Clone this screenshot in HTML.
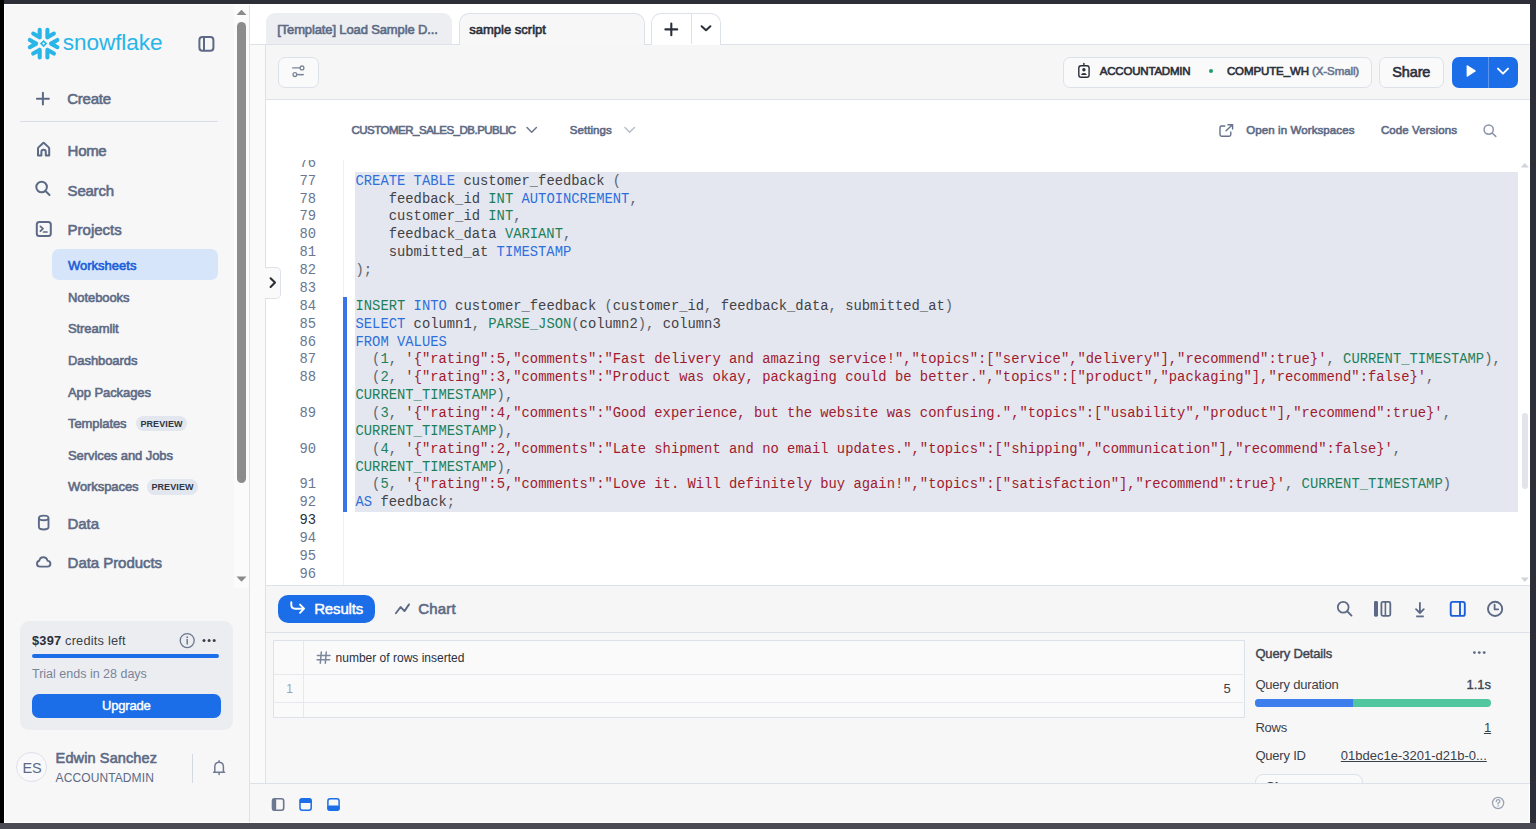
<!DOCTYPE html><html><head><meta charset="utf-8"><style>
html,body{margin:0;padding:0}
body{width:1536px;height:829px;overflow:hidden;position:relative;background:#2d2e38;font-family:"Liberation Sans",sans-serif}
.a{position:absolute}
.t{position:absolute;white-space:pre}
.code{position:absolute;left:355.5px;font-family:"Liberation Mono",monospace;font-size:13.835px;white-space:pre;color:#424247}
.ln{position:absolute;right:1220px;font-family:"Liberation Mono",monospace;font-size:13.82px;white-space:pre;color:#6b7690;text-align:right}
.k{color:#2f6fdc}.g{color:#1d7f5b}.s{color:#a01a2e}.p{color:#5f636c}
</style></head><body>
<div class="a" style="left:0px;top:0px;width:4px;height:829px;background:#000"></div>
<div class="a" style="left:0px;top:823px;width:1536px;height:6px;background:#4a4a54"></div>
<div class="a" style="left:4px;top:4px;width:1526px;height:819px;background:#ffffff"></div>
<div class="a" style="left:5px;top:5px;width:244px;height:817px;background:#f7f7f7"></div>
<div class="a" style="left:249px;top:5px;width:1px;height:817px;background:#dde1ea"></div>
<div class="a" style="left:234px;top:5px;width:15px;height:583px;background:#fbfbfb"></div>
<svg class="a" style="left:236px;top:9px;" width="11" height="7" viewBox="0 0 11 7" fill="none"><path d="M0.5 6 L5.5 0.8 L10.5 6 Z" fill="#8a8a8a"/></svg>
<div class="a" style="left:237px;top:21.7px;width:9px;height:461.1px;background:#8c8c8c;border-radius:4.5px"></div>
<svg class="a" style="left:236px;top:576px;" width="11" height="7" viewBox="0 0 11 7" fill="none"><path d="M0.5 0.5 L5.5 5.8 L10.5 0.5 Z" fill="#8a8a8a"/></svg>
<svg class="a" style="left:24px;top:24px;" width="40" height="40" viewBox="0 0 40 40" fill="none"><g stroke="#29b5e8" stroke-width="4.1" stroke-linecap="round" stroke-linejoin="round">
<path d="M15.7 5.9 V13.4 M9.2 9.6 L15.5 13.3"/>
<path d="M23.4 5.9 V13.4 M29.9 9.6 L23.6 13.3"/>
<path d="M15.7 33.4 V25.8 M9.2 29.6 L15.5 25.9"/>
<path d="M23.4 33.4 V25.8 M29.9 29.6 L23.6 25.9"/>
<path d="M5.8 16 L12.2 19.6 L5.8 23.2"/>
<path d="M33.4 16 L27 19.6 L33.4 23.2"/>
</g>
<path d="M19.6 15.9 L23.3 19.6 L19.6 23.3 L15.9 19.6 Z M19.6 18.3 L18.3 19.6 L19.6 20.9 L20.9 19.6 Z" fill="#29b5e8" fill-rule="evenodd"/></svg>
<div class="t" style="left:62.8px;top:29.26px;font-size:22.6px;line-height:27.12px;font-weight:400;color:#29b5e8;letter-spacing:-0.1px;font-family:'Liberation Sans',sans-serif;">snowflake</div>
<svg class="a" style="left:197px;top:35px;" width="19" height="18" viewBox="0 0 19 18" fill="none"><rect x="2.4" y="2.1" width="14" height="13.6" rx="3" stroke="#5d6a85" stroke-width="2"/><path d="M7 2.5 V15.5" stroke="#5d6a85" stroke-width="2"/></svg>
<svg class="a" style="left:35px;top:91px;" width="16" height="16" viewBox="0 0 16 16" fill="none"><path d="M7.9 1.7 V13.6 M1.9 7.65 H13.9" stroke="#5d6a85" stroke-width="2" stroke-linecap="round"/></svg>
<div class="t" style="left:67.2px;top:90.45px;font-size:15px;line-height:18.0px;font-weight:400;color:#5d6a85;letter-spacing:-0.22px;font-family:'Liberation Sans',sans-serif;-webkit-text-stroke:0.6px #5d6a85;">Create</div>
<div class="a" style="left:20px;top:121px;width:198px;height:1px;background:#d8dde7"></div>
<svg class="a" style="left:35px;top:140px;" width="17" height="18" viewBox="0 0 17 18" fill="none"><path d="M3 15.4 V8.6 Q3 7.9 3.5 7.4 L7.9 3.2 Q8.6 2.6 9.3 3.2 L13.7 7.4 Q14.2 7.9 14.2 8.6 V15.4 H10.8 V11.8 Q10.8 9.7 8.6 9.7 Q6.4 9.7 6.4 11.8 V15.4 Z" stroke="#5d6a85" stroke-width="2" stroke-linejoin="round"/></svg>
<div class="t" style="left:67.6px;top:142.15px;font-size:15px;line-height:18.0px;font-weight:400;color:#5d6a85;letter-spacing:-0.3px;font-family:'Liberation Sans',sans-serif;-webkit-text-stroke:0.6px #5d6a85;">Home</div>
<svg class="a" style="left:34.4px;top:179.4px;" width="18" height="18" viewBox="0 0 18 18" fill="none"><circle cx="7.6" cy="8" r="5.3" stroke="#5d6a85" stroke-width="2"/><path d="M11.5 12 L15.5 16" stroke="#5d6a85" stroke-width="2" stroke-linecap="round"/></svg>
<div class="t" style="left:67.6px;top:181.75px;font-size:15px;line-height:18.0px;font-weight:400;color:#5d6a85;letter-spacing:-0.22px;font-family:'Liberation Sans',sans-serif;-webkit-text-stroke:0.6px #5d6a85;">Search</div>
<svg class="a" style="left:35px;top:220px;" width="18" height="18" viewBox="0 0 18 18" fill="none"><rect x="1.8" y="1.9" width="14" height="14" rx="2.5" stroke="#5d6a85" stroke-width="2"/><path d="M5.4 6.3 L8 8.7 L5.4 11.1 M8.6 12 H12" stroke="#5d6a85" stroke-width="1.7" stroke-linecap="round" stroke-linejoin="round"/></svg>
<div class="t" style="left:67.6px;top:221.05px;font-size:15px;line-height:18.0px;font-weight:400;color:#5d6a85;letter-spacing:0px;font-family:'Liberation Sans',sans-serif;-webkit-text-stroke:0.6px #5d6a85;">Projects</div>
<div class="a" style="left:51.6px;top:248.7px;width:166.4px;height:31.80000000000001px;background:#d7e5fb;border-radius:7px"></div>
<div class="t" style="left:68px;top:258.05px;font-size:13px;line-height:15.6px;font-weight:400;color:#1a5fd8;letter-spacing:0px;font-family:'Liberation Sans',sans-serif;-webkit-text-stroke:0.6px #1a5fd8;">Worksheets</div>
<div class="t" style="left:68px;top:289.75px;font-size:13px;line-height:15.6px;font-weight:400;color:#5d6a85;letter-spacing:-0.08px;font-family:'Liberation Sans',sans-serif;-webkit-text-stroke:0.6px #5d6a85;">Notebooks</div>
<div class="t" style="left:68px;top:321.45px;font-size:13px;line-height:15.6px;font-weight:400;color:#5d6a85;letter-spacing:-0.08px;font-family:'Liberation Sans',sans-serif;-webkit-text-stroke:0.6px #5d6a85;">Streamlit</div>
<div class="t" style="left:68px;top:353.15px;font-size:13px;line-height:15.6px;font-weight:400;color:#5d6a85;letter-spacing:-0.08px;font-family:'Liberation Sans',sans-serif;-webkit-text-stroke:0.6px #5d6a85;">Dashboards</div>
<div class="t" style="left:68px;top:384.85px;font-size:13px;line-height:15.6px;font-weight:400;color:#5d6a85;letter-spacing:-0.08px;font-family:'Liberation Sans',sans-serif;-webkit-text-stroke:0.6px #5d6a85;">App Packages</div>
<div class="t" style="left:68px;top:416.15px;font-size:13px;line-height:15.6px;font-weight:400;color:#5d6a85;letter-spacing:-0.08px;font-family:'Liberation Sans',sans-serif;-webkit-text-stroke:0.6px #5d6a85;">Templates</div>
<div class="t" style="left:68px;top:447.95px;font-size:13px;line-height:15.6px;font-weight:400;color:#5d6a85;letter-spacing:-0.08px;font-family:'Liberation Sans',sans-serif;-webkit-text-stroke:0.6px #5d6a85;">Services and Jobs</div>
<div class="t" style="left:68px;top:479.45px;font-size:13px;line-height:15.6px;font-weight:400;color:#5d6a85;letter-spacing:-0.08px;font-family:'Liberation Sans',sans-serif;-webkit-text-stroke:0.6px #5d6a85;">Workspaces</div>
<div class="a" style="left:136.2px;top:415.6px;width:50.70000000000002px;height:15.399999999999977px;background:#e2e6ee;border-radius:8px;font-size:9px;font-weight:700;color:#2f3542;text-align:center;line-height:16.99999999999998px;letter-spacing:0.1px">PREVIEW</div>
<div class="a" style="left:147.2px;top:479px;width:50.70000000000002px;height:15.5px;background:#e2e6ee;border-radius:8px;font-size:9px;font-weight:700;color:#2f3542;text-align:center;line-height:17.1px;letter-spacing:0.1px">PREVIEW</div>
<svg class="a" style="left:35px;top:513px;" width="17" height="19" viewBox="0 0 17 19" fill="none"><path d="M3.9 5 Q3.9 2.6 8.7 2.6 Q13.5 2.6 13.5 5 V14.1 Q13.5 16.5 8.7 16.5 Q3.9 16.5 3.9 14.1 Z M3.9 5 Q3.9 7.2 8.7 7.2 Q13.5 7.2 13.5 5" stroke="#5d6a85" stroke-width="1.9" stroke-linejoin="round"/></svg>
<div class="t" style="left:67.6px;top:514.65px;font-size:15px;line-height:18.0px;font-weight:400;color:#5d6a85;letter-spacing:-0.1px;font-family:'Liberation Sans',sans-serif;-webkit-text-stroke:0.6px #5d6a85;">Data</div>
<svg class="a" style="left:34.8px;top:554.5px;" width="18" height="14" viewBox="0 0 18 14" fill="none"><path d="M5.2 11.6 H12.4 Q15.4 11.6 15.4 8.8 Q15.4 6.1 12.6 5.9 Q11.7 2.2 8.3 2.2 Q4.9 2.2 4.3 5.7 Q2 6.2 2 8.7 Q2 11.6 5.2 11.6 Z" stroke="#5d6a85" stroke-width="1.9" stroke-linejoin="round"/></svg>
<div class="t" style="left:67.6px;top:554.05px;font-size:15px;line-height:18.0px;font-weight:400;color:#5d6a85;letter-spacing:-0.05px;font-family:'Liberation Sans',sans-serif;-webkit-text-stroke:0.6px #5d6a85;">Data Products</div>
<div class="a" style="left:20.2px;top:621px;width:212.5px;height:108.5px;background:#ecedf1;border-radius:9px"></div>
<div class="t" style="left:32px;top:632.53px;font-size:12.8px;line-height:15.36px;font-weight:400;color:#3a3f4a;letter-spacing:0.2px;font-family:'Liberation Sans',sans-serif;"><b style="color:#2a2f3a">$397</b> credits left</div>
<svg class="a" style="left:178px;top:632px;" width="18" height="18" viewBox="0 0 18 18" fill="none"><circle cx="9.2" cy="8.6" r="7" stroke="#6b7690" stroke-width="1.3"/><path d="M9.2 7.4 V12" stroke="#6b7690" stroke-width="1.5" stroke-linecap="round"/><circle cx="9.2" cy="5.2" r="0.9" fill="#6b7690"/></svg>
<svg class="a" style="left:201px;top:637px;" width="16" height="8" viewBox="0 0 16 8" fill="none"><circle cx="3" cy="3.6" r="1.5" fill="#3a3f4a"/><circle cx="8.1" cy="3.6" r="1.5" fill="#3a3f4a"/><circle cx="13.2" cy="3.6" r="1.5" fill="#3a3f4a"/></svg>
<div class="a" style="left:32px;top:654.4px;width:187px;height:4.0px;background:#1b6ee7;border-radius:2px"></div>
<div class="t" style="left:32px;top:666.82px;font-size:12.5px;line-height:15.0px;font-weight:400;color:#7a8499;letter-spacing:0px;font-family:'Liberation Sans',sans-serif;">Trial ends in 28 days</div>
<div class="a" style="left:31.6px;top:693.9px;width:189.4px;height:24.0px;background:#1b6ee7;border-radius:7px"></div>
<div class="t" style="left:126.3px;transform:translateX(-50%);top:698.25px;font-size:13px;line-height:15.6px;font-weight:400;color:#ffffff;letter-spacing:-0.2px;font-family:'Liberation Sans',sans-serif;-webkit-text-stroke:0.4px #ffffff;">Upgrade</div>
<div class="a" style="left:16.2px;top:751.6px;width:28.7px;height:28.7px;border:1.4px solid #dde1ea;border-radius:50%;background:#f9f9fb"></div>
<div class="t" style="left:32px;transform:translateX(-50%);top:759.93px;font-size:14.5px;line-height:17.4px;font-weight:400;color:#5d6a85;letter-spacing:-0.2px;font-family:'Liberation Sans',sans-serif;">ES</div>
<div class="t" style="left:55.6px;top:750.33px;font-size:14.5px;line-height:17.4px;font-weight:400;color:#5d6a85;letter-spacing:0.12px;font-family:'Liberation Sans',sans-serif;-webkit-text-stroke:0.6px #5d6a85;">Edwin Sanchez</div>
<div class="t" style="left:55.6px;top:771.29px;font-size:12px;line-height:14.4px;font-weight:400;color:#5d6a85;letter-spacing:0.1px;font-family:'Liberation Sans',sans-serif;">ACCOUNTADMIN</div>
<div class="a" style="left:192px;top:753.75px;width:1.1999999999999886px;height:29.350000000000023px;background:#d3d8e2"></div>
<svg class="a" style="left:211px;top:759px;" width="16" height="18" viewBox="0 0 16 18" fill="none"><path d="M2.6 13.2 H13.6 M12.4 13.2 V7.6 Q12.4 3.2 8.1 3.2 Q3.8 3.2 3.8 7.6 V13.2 M8.1 13.4 V15.6 M8.1 1.8 V3.2" stroke="#6f7a92" stroke-width="1.5" stroke-linejoin="round" stroke-linecap="round"/></svg>
<div class="a" style="left:250px;top:45px;width:15px;height:738px;background:#fafafa"></div>
<div class="a" style="left:265px;top:44px;width:1px;height:739px;background:#dde1ea"></div>
<div class="a" style="left:250px;top:44px;width:1280px;height:1px;background:#dde1ea"></div>
<div class="a" style="left:266.25px;top:13.3px;width:185.45px;height:30.7px;background:#eceef2;border-radius:9px 9px 0 0"></div>
<div class="t" style="left:277.2px;top:21.75px;font-size:13px;line-height:15.6px;font-weight:400;color:#5d6a85;letter-spacing:-0.13px;font-family:'Liberation Sans',sans-serif;-webkit-text-stroke:0.6px #5d6a85;">[Template] Load Sample D...</div>
<div class="a" style="left:458.6px;top:13.3px;width:184px;height:32px;background:#f7f7f7;border:1px solid #dde1ea;border-bottom:none;border-radius:10px 10px 0 0"></div>
<div class="t" style="left:469.3px;top:22.35px;font-size:13px;line-height:15.6px;font-weight:400;color:#2a2f3a;letter-spacing:0px;font-family:'Liberation Sans',sans-serif;-webkit-text-stroke:0.6px #2a2f3a;">sample script</div>
<div class="a" style="left:651px;top:13.3px;width:68px;height:30.7px;background:#fff;border:1px solid #dde1ea;border-bottom:none;border-radius:10px 10px 0 0"></div>
<div class="a" style="left:691px;top:14px;width:1px;height:30px;background:#dde1ea"></div>
<svg class="a" style="left:664px;top:22px;" width="15" height="15" viewBox="0 0 15 15" fill="none"><path d="M7.3 1.5 V13.3 M1.4 7.4 H13.2" stroke="#2a2f3a" stroke-width="2.1" stroke-linecap="round"/></svg>
<svg class="a" style="left:700px;top:24px;" width="12" height="9" viewBox="0 0 12 9" fill="none"><path d="M1.6 2.2 L6 6.3 L10.4 2.2" stroke="#2a2f3a" stroke-width="2" stroke-linecap="round" stroke-linejoin="round"/></svg>
<div class="a" style="left:266px;top:45px;width:1264px;height:54px;background:#f6f6f6"></div>
<div class="a" style="left:266px;top:99px;width:1264px;height:1px;background:#dde1ea"></div>
<div class="a" style="left:278.3px;top:56.6px;width:38.3px;height:29px;background:#fafafa;border:1px solid #dde1ea;border-radius:7px"></div>
<svg class="a" style="left:290px;top:63px;" width="16" height="16" viewBox="0 0 16 16" fill="none"><path d="M2.7 4.9 H9.8 M9.5 11.6 H12.7" stroke="#7b859a" stroke-width="1.4" stroke-linecap="round"/><circle cx="12" cy="4.9" r="1.9" stroke="#7b859a" stroke-width="1.3"/><circle cx="4.9" cy="11.6" r="1.9" stroke="#7b859a" stroke-width="1.3"/><path d="M6.8 11.6 H13.8" stroke="#7b859a" stroke-width="1.4"/></svg>
<div class="a" style="left:1063.4px;top:56.6px;width:306.3px;height:29px;background:#fafafa;border:1px solid #dde1ea;border-radius:7px"></div>
<svg class="a" style="left:1076px;top:62px;" width="16" height="18" viewBox="0 0 16 18" fill="none"><rect x="2.8" y="3.8" width="10.3" height="11.4" rx="2.2" stroke="#2a2f3a" stroke-width="1.4"/><path d="M7.9 1.4 V3.6" stroke="#2a2f3a" stroke-width="1.4" stroke-linecap="round"/><circle cx="7.9" cy="7.7" r="1.7" fill="#2a2f3a"/><path d="M5 13.1 Q5.3 10.9 7.9 10.9 Q10.5 10.9 10.8 13.1 Z" fill="#2a2f3a"/></svg>
<div class="t" style="left:1099.8px;top:64.87px;font-size:11.5px;line-height:13.8px;font-weight:400;color:#2a2f3a;letter-spacing:-0.2px;font-family:'Liberation Sans',sans-serif;-webkit-text-stroke:0.6px #2a2f3a;">ACCOUNTADMIN</div>
<div class="a" style="left:1208.8px;top:69.4px;width:4px;height:4px;border-radius:50%;background:#1e9e6a"></div>
<div class="t" style="left:1226.9px;top:64.87px;font-size:11.5px;line-height:13.8px;font-weight:400;color:#2a2f3a;letter-spacing:-0.1px;font-family:'Liberation Sans',sans-serif;-webkit-text-stroke:0.6px #2a2f3a;">COMPUTE_WH <span style="color:#6b7690;-webkit-text-stroke-color:#6b7690">(X-Small)</span></div>
<div class="a" style="left:1379.4px;top:56.6px;width:62.3px;height:29px;background:#fafafa;border:1px solid #dde1ea;border-radius:7px"></div>
<div class="t" style="left:1392.3px;top:64.03px;font-size:14.5px;line-height:17.4px;font-weight:400;color:#2a2f3a;letter-spacing:-0.14px;font-family:'Liberation Sans',sans-serif;-webkit-text-stroke:0.6px #2a2f3a;">Share</div>
<div class="a" style="left:1451.7px;top:56.6px;width:66.09999999999991px;height:31.199999999999996px;background:#1b6ee7;border-radius:7px"></div>
<div class="a" style="left:1488px;top:56.6px;width:1px;height:31.199999999999996px;background:rgba(255,255,255,0.28)"></div>
<svg class="a" style="left:1463px;top:63px;" width="16" height="16" viewBox="0 0 16 16" fill="none"><path d="M3.6 3.2 Q3.6 1.9 4.8 2.6 L12.4 7.3 Q13.3 8 12.4 8.6 L4.8 13.4 Q3.6 14.1 3.6 12.8 Z" fill="#fff"/></svg>
<svg class="a" style="left:1496px;top:66px;" width="14" height="11" viewBox="0 0 14 11" fill="none"><path d="M2 2.6 L7 7.6 L12 2.6" stroke="#fff" stroke-width="2" stroke-linecap="round" stroke-linejoin="round"/></svg>
<div class="a" style="left:266px;top:100px;width:1264px;height:485px;background:#ffffff"></div>
<div class="t" style="left:351.5px;top:123.97px;font-size:11.5px;line-height:13.8px;font-weight:400;color:#5d6a85;letter-spacing:-0.5px;font-family:'Liberation Sans',sans-serif;-webkit-text-stroke:0.6px #5d6a85;">CUSTOMER_SALES_DB.PUBLIC</div>
<svg class="a" style="left:525px;top:125px;" width="14" height="10" viewBox="0 0 14 10" fill="none"><path d="M2 2.5 L6.7 7.2 L11.4 2.5" stroke="#6b7690" stroke-width="1.5" stroke-linecap="round" stroke-linejoin="round"/></svg>
<div class="t" style="left:569.8px;top:123.97px;font-size:11.5px;line-height:13.8px;font-weight:400;color:#5d6a85;letter-spacing:0.05px;font-family:'Liberation Sans',sans-serif;-webkit-text-stroke:0.6px #5d6a85;">Settings</div>
<svg class="a" style="left:623px;top:125px;" width="14" height="10" viewBox="0 0 14 10" fill="none"><path d="M2 2.5 L6.7 7.2 L11.4 2.5" stroke="#b4bbc8" stroke-width="1.4" stroke-linecap="round" stroke-linejoin="round"/></svg>
<svg class="a" style="left:1218px;top:122px;" width="18" height="17" viewBox="0 0 18 17" fill="none"><path d="M6.8 4 H3.6 Q2 4 2 5.6 V12.6 Q2 14.2 3.6 14.2 H11.2 Q12.8 14.2 12.8 12.6 V10 M8 8.8 L14.2 2.9 M10 2.7 H14.6 V7.1" stroke="#66728a" stroke-width="1.4" stroke-linecap="round" stroke-linejoin="round"/></svg>
<div class="t" style="left:1246.2px;top:123.57px;font-size:11.5px;line-height:13.8px;font-weight:400;color:#5d6a85;letter-spacing:0.1px;font-family:'Liberation Sans',sans-serif;-webkit-text-stroke:0.6px #5d6a85;">Open in Workspaces</div>
<div class="t" style="left:1380.9px;top:123.57px;font-size:11.5px;line-height:13.8px;font-weight:400;color:#5d6a85;letter-spacing:0.1px;font-family:'Liberation Sans',sans-serif;-webkit-text-stroke:0.6px #5d6a85;">Code Versions</div>
<svg class="a" style="left:1482px;top:123px;" width="16" height="15" viewBox="0 0 16 15" fill="none"><circle cx="6.7" cy="6.6" r="4.6" stroke="#8b94a8" stroke-width="1.5"/><path d="M10.1 10 L13.8 13.4" stroke="#8b94a8" stroke-width="1.5" stroke-linecap="round"/></svg>
<div class="a" style="left:266px;top:160px;width:1263px;height:425px;overflow:hidden">
<div class="a" style="left:77px;top:0;width:1px;height:425px;background:#eef0f4"></div>
<div class="a" style="left:89px;top:12.199999999999989px;width:1163px;height:339.50px;background:#e4e7ef"></div>
<div class="a" style="left:77px;top:137.29px;width:4px;height:214.41px;background:#3b74e8"></div>
<div class="ln" style="right:1213px;top:-5.17px;line-height:17.87px;color:#6b7690">76</div>
<div class="ln" style="right:1213px;top:12.70px;line-height:17.87px;color:#6b7690">77</div>
<div class="code" style="left:89.5px;top:12.70px;line-height:17.87px"><span class="k">CREATE</span> <span class="k">TABLE</span> customer_feedback <span class="p">(</span></div>
<div class="ln" style="right:1213px;top:30.57px;line-height:17.87px;color:#6b7690">78</div>
<div class="code" style="left:89.5px;top:30.57px;line-height:17.87px">    feedback_id <span class="g">INT</span> <span class="k">AUTOINCREMENT</span><span class="p">,</span></div>
<div class="ln" style="right:1213px;top:48.44px;line-height:17.87px;color:#6b7690">79</div>
<div class="code" style="left:89.5px;top:48.44px;line-height:17.87px">    customer_id <span class="g">INT</span><span class="p">,</span></div>
<div class="ln" style="right:1213px;top:66.31px;line-height:17.87px;color:#6b7690">80</div>
<div class="code" style="left:89.5px;top:66.31px;line-height:17.87px">    feedback_data <span class="g">VARIANT</span><span class="p">,</span></div>
<div class="ln" style="right:1213px;top:84.18px;line-height:17.87px;color:#6b7690">81</div>
<div class="code" style="left:89.5px;top:84.18px;line-height:17.87px">    submitted_at <span class="k">TIMESTAMP</span></div>
<div class="ln" style="right:1213px;top:102.05px;line-height:17.87px;color:#6b7690">82</div>
<div class="code" style="left:89.5px;top:102.05px;line-height:17.87px"><span class="p">)</span><span class="p">;</span></div>
<div class="ln" style="right:1213px;top:119.92px;line-height:17.87px;color:#6b7690">83</div>
<div class="ln" style="right:1213px;top:137.79px;line-height:17.87px;color:#6b7690">84</div>
<div class="code" style="left:89.5px;top:137.79px;line-height:17.87px"><span class="g">INSERT</span> <span class="k">INTO</span> customer_feedback <span class="p">(</span>customer_id<span class="p">,</span> feedback_data<span class="p">,</span> submitted_at<span class="p">)</span></div>
<div class="ln" style="right:1213px;top:155.66px;line-height:17.87px;color:#6b7690">85</div>
<div class="code" style="left:89.5px;top:155.66px;line-height:17.87px"><span class="k">SELECT</span> column1<span class="p">,</span> <span class="g">PARSE_JSON</span><span class="p">(</span>column2<span class="p">)</span><span class="p">,</span> column3</div>
<div class="ln" style="right:1213px;top:173.53px;line-height:17.87px;color:#6b7690">86</div>
<div class="code" style="left:89.5px;top:173.53px;line-height:17.87px"><span class="k">FROM</span> <span class="k">VALUES</span></div>
<div class="ln" style="right:1213px;top:191.40px;line-height:17.87px;color:#6b7690">87</div>
<div class="code" style="left:89.5px;top:191.40px;line-height:17.87px">  <span class="p">(</span><span class="g">1</span><span class="p">,</span> <span class="s">&#x27;{&quot;rating&quot;:5,&quot;comments&quot;:&quot;Fast delivery and amazing service!&quot;,&quot;topics&quot;:[&quot;service&quot;,&quot;delivery&quot;],&quot;recommend&quot;:true}&#x27;</span><span class="p">,</span> <span class="g">CURRENT_TIMESTAMP</span><span class="p">)</span><span class="p">,</span></div>
<div class="ln" style="right:1213px;top:209.27px;line-height:17.87px;color:#6b7690">88</div>
<div class="code" style="left:89.5px;top:209.27px;line-height:17.87px">  <span class="p">(</span><span class="g">2</span><span class="p">,</span> <span class="s">&#x27;{&quot;rating&quot;:3,&quot;comments&quot;:&quot;Product was okay, packaging could be better.&quot;,&quot;topics&quot;:[&quot;product&quot;,&quot;packaging&quot;],&quot;recommend&quot;:false}&#x27;</span><span class="p">,</span></div>
<div class="code" style="left:89.5px;top:227.14px;line-height:17.87px"><span class="g">CURRENT_TIMESTAMP</span><span class="p">)</span><span class="p">,</span></div>
<div class="ln" style="right:1213px;top:245.01px;line-height:17.87px;color:#6b7690">89</div>
<div class="code" style="left:89.5px;top:245.01px;line-height:17.87px">  <span class="p">(</span><span class="g">3</span><span class="p">,</span> <span class="s">&#x27;{&quot;rating&quot;:4,&quot;comments&quot;:&quot;Good experience, but the website was confusing.&quot;,&quot;topics&quot;:[&quot;usability&quot;,&quot;product&quot;],&quot;recommend&quot;:true}&#x27;</span><span class="p">,</span></div>
<div class="code" style="left:89.5px;top:262.88px;line-height:17.87px"><span class="g">CURRENT_TIMESTAMP</span><span class="p">)</span><span class="p">,</span></div>
<div class="ln" style="right:1213px;top:280.75px;line-height:17.87px;color:#6b7690">90</div>
<div class="code" style="left:89.5px;top:280.75px;line-height:17.87px">  <span class="p">(</span><span class="g">4</span><span class="p">,</span> <span class="s">&#x27;{&quot;rating&quot;:2,&quot;comments&quot;:&quot;Late shipment and no email updates.&quot;,&quot;topics&quot;:[&quot;shipping&quot;,&quot;communication&quot;],&quot;recommend&quot;:false}&#x27;</span><span class="p">,</span></div>
<div class="code" style="left:89.5px;top:298.62px;line-height:17.87px"><span class="g">CURRENT_TIMESTAMP</span><span class="p">)</span><span class="p">,</span></div>
<div class="ln" style="right:1213px;top:316.49px;line-height:17.87px;color:#6b7690">91</div>
<div class="code" style="left:89.5px;top:316.49px;line-height:17.87px">  <span class="p">(</span><span class="g">5</span><span class="p">,</span> <span class="s">&#x27;{&quot;rating&quot;:5,&quot;comments&quot;:&quot;Love it. Will definitely buy again!&quot;,&quot;topics&quot;:[&quot;satisfaction&quot;],&quot;recommend&quot;:true}&#x27;</span><span class="p">,</span> <span class="g">CURRENT_TIMESTAMP</span><span class="p">)</span></div>
<div class="ln" style="right:1213px;top:334.36px;line-height:17.87px;color:#6b7690">92</div>
<div class="code" style="left:89.5px;top:334.36px;line-height:17.87px"><span class="k">AS</span> feedback<span class="p">;</span></div>
<div class="ln" style="right:1213px;top:352.23px;line-height:17.87px;color:#2a2f3a">93</div>
<div class="ln" style="right:1213px;top:370.10px;line-height:17.87px;color:#6b7690">94</div>
<div class="ln" style="right:1213px;top:387.97px;line-height:17.87px;color:#6b7690">95</div>
<div class="ln" style="right:1213px;top:405.84px;line-height:17.87px;color:#6b7690">96</div>
<svg class="a" style="left:1254px;top:2px" width="10" height="6" viewBox="0 0 10 6"><path d="M0.8 5.5 L4.8 1 L8.8 5.5 Z" fill="#cfd4dc"/></svg>
<div class="a" style="left:1256.2px;top:252.60000000000002px;width:5.6px;height:76.3px;background:#e1e4ea;border-radius:3px"></div>
<svg class="a" style="left:1254px;top:417px" width="10" height="6" viewBox="0 0 10 6"><path d="M0.8 0.5 L4.8 5 L8.8 0.5 Z" fill="#cfd4dc"/></svg>
</div>
<div class="a" style="left:266px;top:585px;width:1264px;height:1px;background:#dde1ea"></div>
<div class="a" style="left:266px;top:586px;width:1264px;height:46px;background:#f6f6f6"></div>
<div class="a" style="left:266px;top:632px;width:1264px;height:1px;background:#dde1ea"></div>
<div class="a" style="left:277.5px;top:595.1px;width:97.10000000000002px;height:27.5px;background:#1b6ee7;border-radius:10px"></div>
<svg class="a" style="left:288px;top:600px;" width="18" height="16" viewBox="0 0 18 16" fill="none"><path d="M3.3 2.2 V4.8 Q3.3 8.7 7.2 8.7 H15.9 M12 4.6 L16.1 8.7 L12 12.8" stroke="#fff" stroke-width="1.9" stroke-linecap="round" stroke-linejoin="round"/></svg>
<div class="t" style="left:314.2px;top:600.45px;font-size:15px;line-height:18.0px;font-weight:400;color:#ffffff;letter-spacing:-0.15px;font-family:'Liberation Sans',sans-serif;-webkit-text-stroke:0.45px #ffffff;">Results</div>
<svg class="a" style="left:394px;top:601px;" width="17" height="14" viewBox="0 0 17 14" fill="none"><path d="M1.9 12.2 L6.6 6 L10.5 10.1 L15 3.4" stroke="#5d6a85" stroke-width="1.9" stroke-linecap="round" stroke-linejoin="round"/></svg>
<div class="t" style="left:418.3px;top:600.45px;font-size:15px;line-height:18.0px;font-weight:400;color:#5d6a85;letter-spacing:0.18px;font-family:'Liberation Sans',sans-serif;-webkit-text-stroke:0.6px #5d6a85;">Chart</div>
<svg class="a" style="left:1334px;top:598px;" width="22" height="22" viewBox="0 0 22 22" fill="none"><circle cx="9.2" cy="9.3" r="5.4" stroke="#5d6a85" stroke-width="1.8"/><path d="M13.3 13.4 L17.5 17.6" stroke="#5d6a85" stroke-width="1.9" stroke-linecap="round"/></svg>
<svg class="a" style="left:1372px;top:599px;" width="21" height="20" viewBox="0 0 21 20" fill="none"><rect x="2" y="2" width="4" height="15.7" rx="1.4" fill="#5d6a85"/><rect x="9.4" y="2.9" width="8.9" height="13.9" rx="1.5" stroke="#5d6a85" stroke-width="1.8"/><path d="M13.4 3 V16.8" stroke="#5d6a85" stroke-width="1.6"/></svg>
<svg class="a" style="left:1412px;top:600px;" width="16" height="19" viewBox="0 0 16 19" fill="none"><path d="M7.9 2.8 V12.6 M4 9.2 L7.9 13 L11.8 9.2" stroke="#5d6a85" stroke-width="1.8" stroke-linecap="round" stroke-linejoin="round"/><path d="M4.2 16.4 H11.8" stroke="#5d6a85" stroke-width="1.8"/></svg>
<svg class="a" style="left:1448px;top:599px;" width="20" height="20" viewBox="0 0 20 20" fill="none"><rect x="2.7" y="2.9" width="14.1" height="14" rx="2" stroke="#1a5fd8" stroke-width="1.9"/><path d="M12 3 V16.8" stroke="#1a5fd8" stroke-width="1.9"/></svg>
<svg class="a" style="left:1486px;top:600px;" width="19" height="19" viewBox="0 0 19 19" fill="none"><circle cx="9.1" cy="8.9" r="7.1" stroke="#5d6a85" stroke-width="1.9"/><path d="M8.6 4.6 V9.3 H12.2" stroke="#5d6a85" stroke-width="1.8" stroke-linecap="round" stroke-linejoin="round"/></svg>
<div class="a" style="left:266px;top:633px;width:1264px;height:150px;background:#f7f7f7"></div>
<div class="a" style="left:273.1px;top:640.1px;width:970px;height:76px;background:#fafafa;border:1px solid #dde1ea"></div>
<div class="a" style="left:274px;top:674px;width:969.3px;height:1px;background:#e6e8ee"></div>
<div class="a" style="left:274px;top:702px;width:969.3px;height:1px;background:#e6e8ee"></div>
<div class="a" style="left:303.2px;top:641px;width:1.0px;height:75.5px;background:#e6e8ee"></div>
<svg class="a" style="left:315px;top:650px;" width="18" height="15" viewBox="0 0 18 15" fill="none"><path d="M6.3 2 L5.3 13.3 M11.3 2 L10.3 13.3 M2.4 5.6 H15 M2.1 9.8 H14.7" stroke="#7d879b" stroke-width="1.5" stroke-linecap="round"/></svg>
<div class="t" style="left:335.6px;top:650.69px;font-size:12px;line-height:14.4px;font-weight:400;color:#2a2f3a;letter-spacing:0px;font-family:'Liberation Sans',sans-serif;">number of rows inserted</div>
<div class="t" style="left:286.2px;top:682.09px;font-size:12px;line-height:14.4px;font-weight:400;color:#9aa3b5;letter-spacing:0px;font-family:'Liberation Sans',sans-serif;">1</div>
<div class="t" style="right:305.20000000000005px;top:680.85px;font-size:13px;line-height:15.6px;font-weight:400;color:#3a3f4a;letter-spacing:0px;font-family:'Liberation Sans',sans-serif;">5</div>
<div class="t" style="left:1255.4px;top:645.55px;font-size:13px;line-height:15.6px;font-weight:400;color:#3d4350;letter-spacing:-0.15px;font-family:'Liberation Sans',sans-serif;-webkit-text-stroke:0.4px #3d4350;">Query Details</div>
<svg class="a" style="left:1471px;top:649px;" width="18" height="8" viewBox="0 0 18 8" fill="none"><circle cx="3.4" cy="3.6" r="1.4" fill="#5d6a85"/><circle cx="8.3" cy="3.6" r="1.4" fill="#5d6a85"/><circle cx="13.2" cy="3.6" r="1.4" fill="#5d6a85"/></svg>
<div class="t" style="left:1255.4px;top:676.75px;font-size:13px;line-height:15.6px;font-weight:400;color:#3a3f4a;letter-spacing:-0.2px;font-family:'Liberation Sans',sans-serif;">Query duration</div>
<div class="t" style="right:44.90000000000009px;top:676.75px;font-size:13px;line-height:15.6px;font-weight:400;color:#3d4350;letter-spacing:0px;font-family:'Liberation Sans',sans-serif;-webkit-text-stroke:0.35px #3d4350;">1.1s</div>
<div class="a" style="left:1255.4px;top:699.3px;width:235.7px;height:7.4px;border-radius:3.7px;overflow:hidden;background:#52c69e"><div style="width:97.3px;height:100%;background:#3b7eec"></div></div>
<div class="t" style="left:1255.4px;top:719.95px;font-size:13px;line-height:15.6px;font-weight:400;color:#3a3f4a;letter-spacing:-0.2px;font-family:'Liberation Sans',sans-serif;">Rows</div>
<div class="t" style="right:44.90000000000009px;top:719.95px;font-size:13px;line-height:15.6px;font-weight:400;color:#3a3f4a;letter-spacing:0px;font-family:'Liberation Sans',sans-serif;text-decoration:underline;">1</div>
<div class="t" style="left:1255.4px;top:747.75px;font-size:13px;line-height:15.6px;font-weight:400;color:#3a3f4a;letter-spacing:-0.2px;font-family:'Liberation Sans',sans-serif;">Query ID</div>
<div class="t" style="left:1340.8px;top:747.75px;font-size:13px;line-height:15.6px;font-weight:400;color:#3a3f4a;letter-spacing:0px;font-family:'Liberation Sans',sans-serif;text-decoration:underline;">01bdec1e-3201-d21b-0...</div>
<div class="a" style="left:1253px;top:770px;width:130px;height:13.3px;overflow:hidden"><div class="a" style="left:2.4px;top:4px;width:106px;height:20px;background:#fafafa;border:1.3px solid #dde1ea;border-radius:8px"></div><div class="t" style="left:13px;top:8.6px;font-size:13px;font-weight:700;color:#3a3f4a;line-height:15px">Sh</div><div class="t" style="left:68px;top:8.6px;font-size:13px;font-weight:700;color:#c8ccd6;line-height:15px">· ·</div></div>
<div class="a" style="left:250px;top:783px;width:1280px;height:1px;background:#dde1ea"></div>
<div class="a" style="left:250px;top:784px;width:1279px;height:38px;background:#f7f7f7"></div>
<svg class="a" style="left:270px;top:796px;" width="16" height="16" viewBox="0 0 16 16" fill="none"><rect x="2.5" y="2.8" width="11.2" height="11.4" rx="2.2" stroke="#6b7690" stroke-width="1.6"/><rect x="2" y="2.5" width="4.2" height="12" rx="1.6" fill="#6b7690"/></svg>
<svg class="a" style="left:298px;top:796px;" width="16" height="16" viewBox="0 0 16 16" fill="none"><rect x="2" y="2.8" width="11.2" height="11.4" rx="2.2" stroke="#1b6ee7" stroke-width="1.5"/><rect x="1.6" y="2.4" width="12" height="4.6" rx="1.6" fill="#1b6ee7"/></svg>
<svg class="a" style="left:326px;top:796px;" width="16" height="16" viewBox="0 0 16 16" fill="none"><rect x="1.9" y="2.8" width="11.2" height="11.4" rx="2.2" stroke="#1b6ee7" stroke-width="1.5"/><rect x="1.5" y="9.6" width="12" height="4.9" rx="1.6" fill="#1b6ee7"/></svg>
<svg class="a" style="left:1490px;top:795px;" width="16" height="16" viewBox="0 0 16 16" fill="none"><circle cx="8.1" cy="8" r="5.6" stroke="#9aa3b5" stroke-width="1.3"/><path d="M6.3 6.6 Q6.3 4.7 8.1 4.7 Q9.9 4.7 9.9 6.3 Q9.9 7.4 8.1 8.1 V9" stroke="#9aa3b5" stroke-width="1.3" stroke-linecap="round" fill="none"/><circle cx="8.1" cy="11" r="0.8" fill="#9aa3b5"/></svg>
<div class="a" style="left:265px;top:267.4px;width:14.5px;height:29.4px;background:#fafafa;border:1px solid #dde1ea;border-left:none;border-radius:0 5px 5px 0"></div>
<svg class="a" style="left:268px;top:276px;" width="10" height="13" viewBox="0 0 10 13" fill="none"><path d="M2.6 2.3 L7 6.6 L2.6 10.9" stroke="#2a2f3a" stroke-width="2.1" stroke-linecap="round" stroke-linejoin="round"/></svg>
</body></html>
